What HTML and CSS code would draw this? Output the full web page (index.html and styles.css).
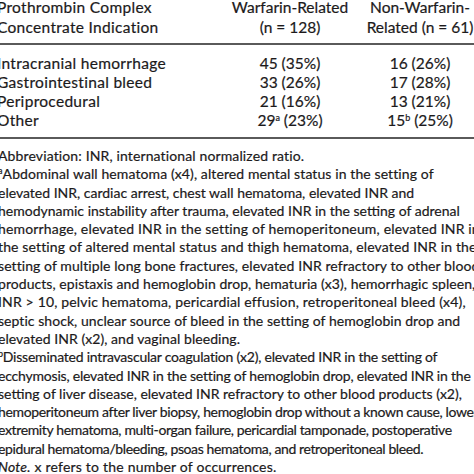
FILE: index.html
```html
<!DOCTYPE html>
<html>
<head>
<meta charset="utf-8">
<link rel="stylesheet" href="styles.css">
</head>
<body>
<div class="page">
  <div class="table">
    <div class="head">
      <div class="c1">Prothrombin Complex<br>Concentrate Indication</div>
      <div class="c2">Warfarin-Related<br>(n = 128)</div>
      <div class="c3">Non-Warfarin-<br>Related (n = 61)</div>
    </div>
    <div class="body">
      <div class="row"><div class="c1">Intracranial hemorrhage</div><div class="c2">45 (35%)</div><div class="c3">16 (26%)</div></div>
      <div class="row"><div class="c1">Gastrointestinal bleed</div><div class="c2">33 (26%)</div><div class="c3">17 (28%)</div></div>
      <div class="row"><div class="c1">Periprocedural</div><div class="c2">21 (16%)</div><div class="c3">13 (21%)</div></div>
      <div class="row"><div class="c1">Other</div><div class="c2">29<sup>a</sup> (23%)</div><div class="c3">15<sup>b</sup> (25%)</div></div>
    </div>
  </div>
  <div class="notes">
    <span class="ln l1">Abbreviation: INR, international normalized ratio.</span>
    <span class="ln l2"><sup>a</sup>Abdominal wall hematoma (x4), altered mental status in the setting of</span>
    <span class="ln l3">elevated INR, cardiac arrest, chest wall hematoma, elevated INR and</span>
    <span class="ln l4">hemodynamic instability after trauma, elevated INR in the setting of adrenal</span>
    <span class="ln l5">hemorrhage, elevated INR in the setting of hemoperitoneum, elevated INR in</span>
    <span class="ln l6">the setting of altered mental status and thigh hematoma, elevated INR in the</span>
    <span class="ln l7">setting of multiple long bone fractures, elevated INR refractory to other blood</span>
    <span class="ln l8">products, epistaxis and hemoglobin drop, hematuria (x3), hemorrhagic spleen,</span>
    <span class="ln l9">INR &gt; 10, pelvic hematoma, pericardial effusion, retroperitoneal bleed (x4),</span>
    <span class="ln l10">septic shock, unclear source of bleed in the setting of hemoglobin drop and</span>
    <span class="ln l11">elevated INR (x2), and vaginal bleeding.</span>
    <span class="ln l12"><sup>b</sup>Disseminated intravascular coagulation (x2), elevated INR in the setting of</span>
    <span class="ln l13">ecchymosis, elevated INR in the setting of hemoglobin drop, elevated INR in the</span>
    <span class="ln l14">setting of liver disease, elevated INR refractory to other blood products (x2),</span>
    <span class="ln l15">hemoperitoneum after liver biopsy, hemoglobin drop without a known cause, lower</span>
    <span class="ln l16">extremity hematoma, multi-organ failure, pericardial tamponade, postoperative</span>
    <span class="ln l17">epidural hematoma/bleeding, psoas hematoma, and retroperitoneal bleed.</span>
    <span class="ln l18"><i>Note.</i> x refers to the number of occurrences.</span>
  </div>
</div>
</body>
</html>
```
FILE: styles.css
```css
html, body {
  margin: 0;
  padding: 0;
  background: #ffffff;
  overflow: hidden;
}
.page {
  width: 474px;
  height: 474px;
  overflow: hidden;
  font-family: "Lato", "Open Sans", sans-serif;
  color: #1c1a1b;
  -webkit-text-stroke: 0.2px #1c1a1b;
}
.table {
  margin-left: -3px;
  width: 500px;
  font-size: 15.5px;
}
.head, .row {
  display: grid;
  grid-template-columns: 230px 126px 134px;
}
.head {
  line-height: 20px;
  margin-top: -3px;
  padding-bottom: 6px;
  border-bottom: 2px solid #5a5a5a;
}
.body {
  padding-top: 9px;
  padding-bottom: 7px;
  border-bottom: 2px solid #5a5a5a;
}
.row {
  line-height: 19px;
}
.c1 {
  letter-spacing: 0.3px;
}
.c2, .c3 {
  text-align: center;
  white-space: nowrap;
}
sup {
  font-size: 9px;
  line-height: 0;
  vertical-align: 5px;
}
.notes {
  margin-left: -2px;
  padding-top: 8px;
  line-height: 18.3px;
  font-size: 14px;
}
.ln {
  display: block;
  white-space: nowrap;
}
.l1 { letter-spacing: 0.13px; }
.l2 { letter-spacing: 0.1px; }
.l3 { letter-spacing: 0; }
.l4 { letter-spacing: 0; }
.l5 { letter-spacing: 0.16px; }
.l6 { letter-spacing: 0.14px; }
.l7 { letter-spacing: 0.08px; }
.l8 { letter-spacing: 0.06px; }
.l9 { letter-spacing: 0.16px; }
.l10 { letter-spacing: 0.05px; }
.l11 { letter-spacing: 0.06px; }
.l12 { letter-spacing: -0.22px; }
.l13 { letter-spacing: -0.2px; }
.l14 { letter-spacing: 0; }
.l15 { letter-spacing: -0.36px; }
.l16 { letter-spacing: -0.36px; }
.l17 { letter-spacing: -0.39px; }
.l18 { letter-spacing: 0.21px; }
```
